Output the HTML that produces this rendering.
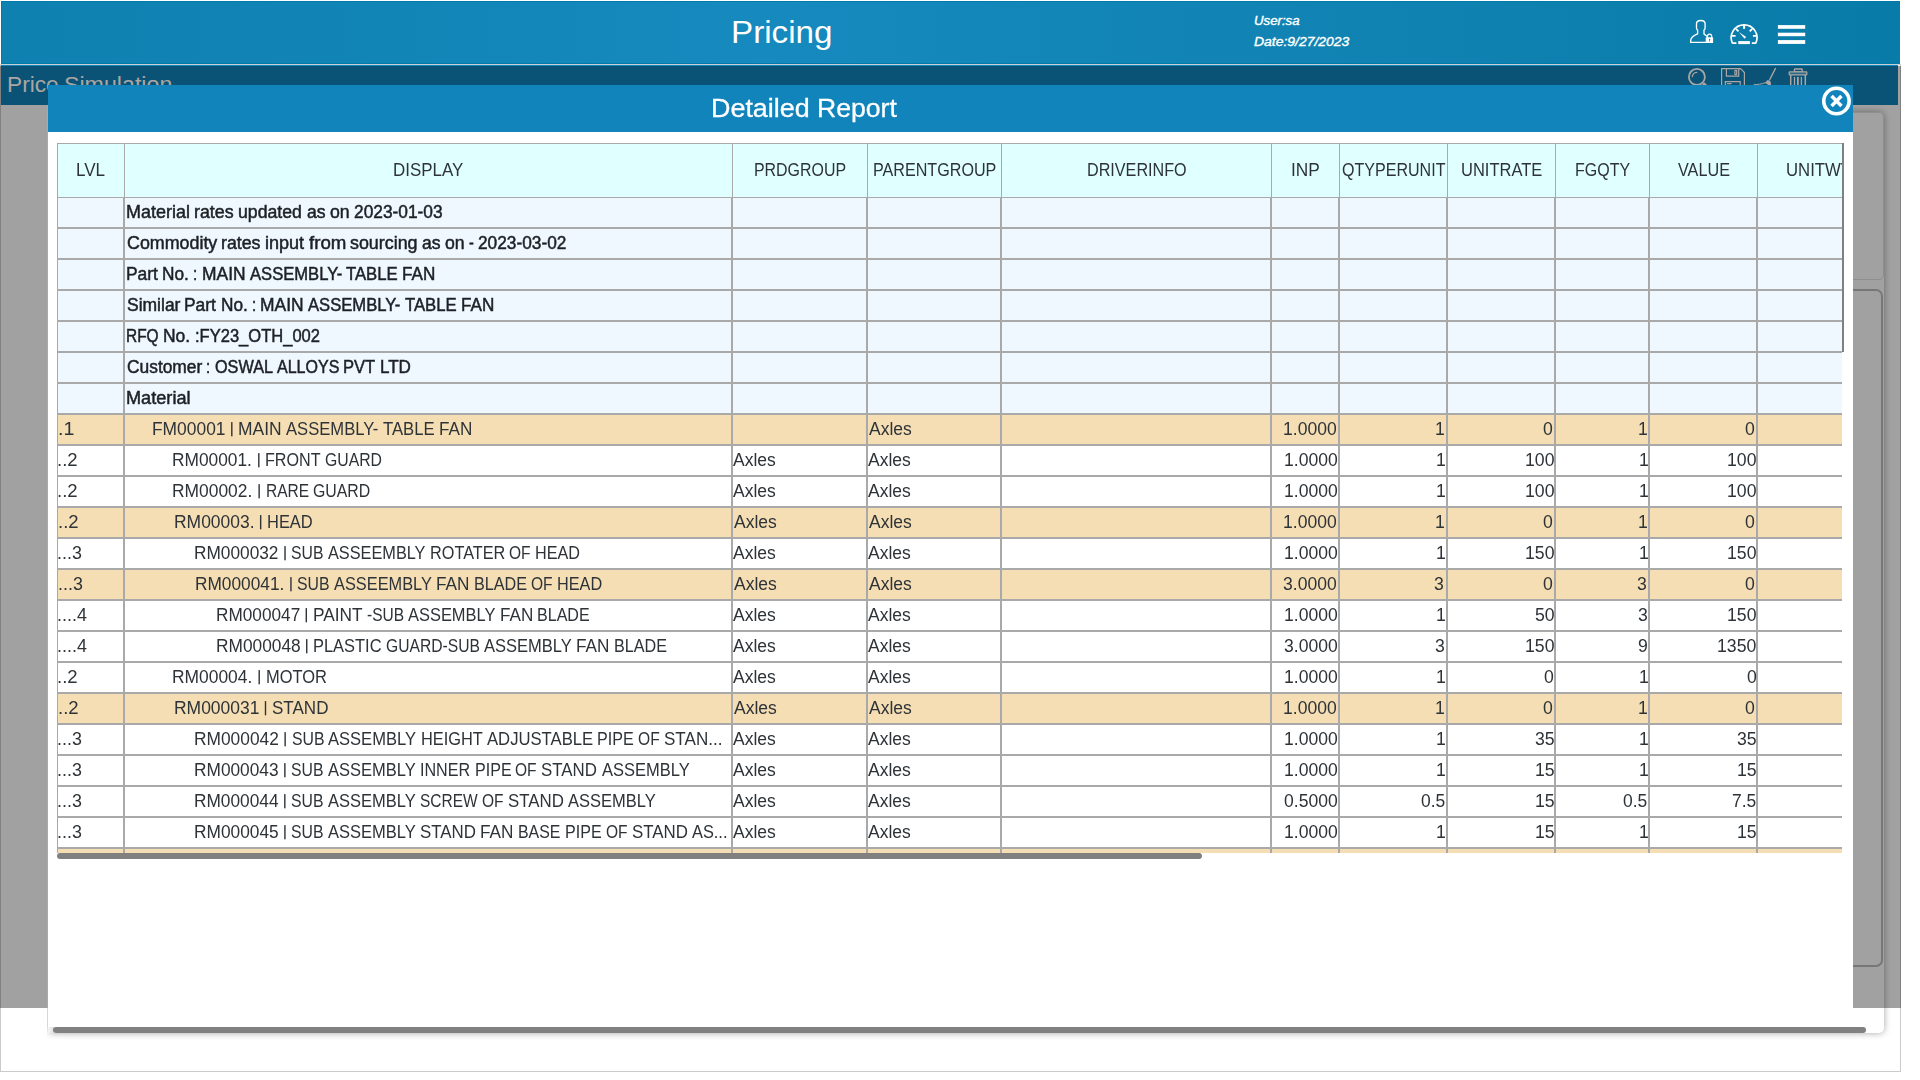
<!DOCTYPE html>
<html><head><meta charset="utf-8"><title>Pricing</title>
<style>

html,body{margin:0;padding:0;}
body{width:1920px;height:1080px;overflow:hidden;background:#fff;position:relative;font-family:'Liberation Sans',sans-serif;}
div{position:absolute;box-sizing:border-box;}
svg{position:absolute;overflow:visible;}
.t{white-space:pre;transform-origin:0 0;}
#frame{left:0;top:64px;width:1901px;height:1008px;border:1px solid #cbcbcb;}
#hdr{left:1px;top:1px;width:1899px;height:63px;background:linear-gradient(90deg,#0e81b0 0%,#1689be 40%,#0f82b1 76%,#097ba9 100%);box-shadow:inset 1px 1px 0 #0079ab, inset 0 -1px 0 #0079ab;}
#hline{left:1px;top:64px;width:1899px;height:1px;background:#cdd1d3;}
#sub{left:1px;top:65px;width:1897px;height:40px;background:#1284bc;}
#subb{left:1px;top:65px;width:1899px;height:41px;border-right:2px solid #fff;border-bottom:1px solid #fff;}
#cont{left:48px;top:112px;width:1836px;height:921px;background:#fff;border-radius:5px;box-shadow:0 0 7px rgba(0,0,0,.36);}
#lcover{left:1px;top:106px;width:46px;height:929px;background:#fff;}
#lpatch{left:48px;top:1027px;width:6px;height:6px;background:linear-gradient(90deg,#f6f6f6,#dedede);}
#card1{left:48px;top:112px;width:1836px;height:168px;border:1px solid #dee2e6;border-radius:5px;}
#card2{left:48px;top:289px;width:1835px;height:678px;border:2px solid #bdbdbd;border-radius:7px;}
#sb2{left:53px;top:1027px;width:1813px;height:6px;border-radius:3px;background:#808080;}
#ovl{left:0;top:66px;width:1901px;height:942px;background:rgba(0,0,0,.37);}
#modal{left:48px;top:85px;width:1805px;height:923px;background:#fff;}
#mh{left:0;top:0;width:1805px;height:47px;background:#1284bc;}
#mledge{left:47px;top:105px;width:1px;height:903px;background:#aea8a5;}
#tv{left:57px;top:143px;width:1785px;height:710px;overflow:hidden;background:#fff;}
.r{left:0;width:1785px;height:29px;}
.ri{background:#f0f8ff;} .rw{background:#f5deb3;} .rn{background:#fff;}
.hl{left:0;width:1785px;height:2px;background:#a9a9a9;}
.vl{top:55px;width:2px;height:655px;background:#a9a9a9;}
#th{left:0;top:0;width:1785px;height:55px;background:#e0ffff;border-top:1px solid #a9a9a9;border-bottom:1px solid #a9a9a9;}
.hv{top:0;width:1px;height:55px;background:#a9a9a9;}
#lb{left:0;top:0;width:1px;height:710px;background:#a9a9a9;}
#sbh{left:57px;top:853px;width:1145px;height:6px;border-radius:3px;background:#808080;}
#sbv{left:1842px;top:143px;width:2px;height:209px;background:#808080;}

</style></head><body>
<div id="frame"></div>
<div id="hdr"></div><div id="hline"></div>
<div class="t" style="left:730.85px;top:13px;font-size:32px;line-height:38px;height:38px;color:#ffffff;transform:scaleX(1.0376);">Pricing</div>
<div class="t" style="left:1254.07px;top:12px;font-size:12px;line-height:18px;height:18px;color:#ffffff;font-style:italic;-webkit-text-stroke:0.35px #ffffff;transform:scaleX(1.1013);">User:sa</div>
<div class="t" style="left:1253.91px;top:33px;font-size:12px;line-height:18px;height:18px;color:#ffffff;font-style:italic;-webkit-text-stroke:0.35px #ffffff;transform:scaleX(1.1617);">Date:9/27/2023</div>
<svg width="1920" height="66" style="left:0;top:0" viewBox="0 0 1920 66">
<g fill="none" stroke="#ffffff" stroke-width="1.35" stroke-linejoin="round" stroke-linecap="round">
<path d="M1706.6 36.1 L1704 33.9 L1704 30.1 C1705 29.5 1705.1 28.9 1705.1 28 L1705.1 23.7 C1705.1 21.6 1703.4 20.5 1700.8 20.5 C1698.2 20.5 1696.5 21.6 1696.5 23.7 L1696.5 28 C1696.5 28.9 1696.6 29.5 1697.6 30.1 L1697.6 33.9 C1694.5 35.3 1690.7 36.8 1690.7 40.4 L1690.7 42.4 L1706 42.4"/>
<path d="M1707.5 37.4 V36.2 a2.1 2.1 0 0 1 4.2 0 V37.4" stroke-width="1.2"/>
</g>
<rect x="1705.7" y="37.2" width="7.4" height="5.8" rx="0.6" fill="#ffffff"/>
<circle cx="1709.6" cy="39.5" r="0.7" fill="#1585b8"/><rect x="1709.25" y="39.6" width="0.7" height="2" fill="#1585b8"/>
<g fill="none" stroke="#ffffff" stroke-width="1.6">
<path d="M1732.53 43.4 A12.9 12.9 0 1 1 1755.67 43.4" stroke-width="1.7"/>
<path d="M1732.3 43.1 H1736.4 M1751.8 43.1 H1755.9" stroke-width="1.7"/>
<path d="M1744.1 24.9 V28.8" stroke-width="2"/>
<path d="M1736 28.9 L1738.5 31.4 M1752.2 28.9 L1749.7 31.4" stroke-width="1.9"/>
<path d="M1731.9 35.9 H1735.6 M1752.9 35.9 H1756.5" stroke-width="1.9"/>
</g>
<path d="M1738.9 31.9 L1746.2 37.1 L1744.6 38.7 Z" fill="#ffffff"/>
<rect x="1738.3" y="41.1" width="11.6" height="3" fill="#ffffff"/>
<rect x="1777.9" y="25.1" width="27.3" height="3.7" fill="#ffffff"/>
<rect x="1777.9" y="32.7" width="27.3" height="3.5" fill="#ffffff"/>
<rect x="1777.9" y="40.1" width="27.3" height="3.8" fill="#ffffff"/>
</svg>
<div id="sub"></div><div id="subb"></div>
<div id="cont"></div><div id="lcover"></div><div id="lpatch"></div><div id="card1"></div><div id="card2"></div><div id="sb2"></div>
<div id="ovl"></div>
<div class="t" style="left:6.76px;top:71px;font-size:22px;line-height:28px;height:28px;color:#aaa6a4;transform:scaleX(1.0321);">Price</div>
<div class="t" style="left:64.15px;top:71px;font-size:22px;line-height:28px;height:28px;color:#aaa6a4;transform:scaleX(1.0543);">Simulation</div>
<div style="left:1680px;top:66px;width:140px;height:19px;overflow:hidden"><svg width="140" height="30" style="left:0;top:0" viewBox="1680 66 140 30">
<g fill="none" stroke="#aaa6a4" stroke-width="1.2">
<circle cx="1696.9" cy="76.9" r="8" stroke-width="1.8"/>
<path d="M1692.3 76.7 A4.9 4.9 0 0 1 1696.8 72.3" stroke-width="1.2" stroke-linecap="round"/>
<path d="M1703.2 83.2 L1709 89" stroke-width="3"/>
<path d="M1721.6 95 V68.6 H1740.6 L1744.4 72.5 V95" />
<path d="M1726.4 68.6 V76.1 H1738.7 V68.6"/>
<rect x="1734.9" y="70.4" width="1.8" height="4.2" rx="0.5"/>
<path d="M1725.3 95 V81.6 H1740.2 V95"/>
<path d="M1727.4 83.6 H1731.2" stroke-linecap="round"/>
<path d="M1775.5 68.4 L1769.7 79.6" stroke-width="1.3" stroke-linecap="round"/>
<path d="M1765.6 82.6 C1761.5 84.2 1758 84.6 1753.8 84.6" stroke-width="1"/>
<rect x="1794.4" y="69.0" width="7.8" height="2.8" rx="0.5" stroke-width="1.3"/>
<rect x="1789.2" y="71.9" width="17.6" height="2.9" rx="0.5" stroke-width="1.3" fill="#2d6a88"/>
<path d="M1790.7 75 V95 M1805.3 75 V95" stroke-width="1.5"/>
<path d="M1794.5 77 V95 M1801.4 77 V95" stroke-width="1.3"/>
<path d="M1797.9 77 V95" stroke-width="1.8"/>
</g>
<path d="M1767.6 80.1 L1770 80.8 C1770.8 82 1771.1 83.2 1771 85 L1768.3 85 C1767 84 1766 83.4 1764.9 82.9 Z" fill="#aaa6a4"/>
</svg></div>
<div id="mledge"></div>
<div id="modal"><div id="mh"></div></div>
<div style="left:0;top:0;width:1920px;height:140px;will-change:transform;">
<div class="t" style="left:711.11px;top:92px;font-size:26px;line-height:32px;height:32px;color:#ffffff;-webkit-text-stroke:0.3px #ffffff;transform:scaleX(1.0345);">Detailed</div>
<div class="t" style="left:816.53px;top:92px;font-size:26px;line-height:32px;height:32px;color:#ffffff;-webkit-text-stroke:0.3px #ffffff;transform:scaleX(1.0234);">Report</div>
</div>
<svg width="40" height="40" style="left:1816px;top:81px" viewBox="1816 81 40 40">
<circle cx="1836.45" cy="101" r="12.7" fill="none" stroke="#ffffff" stroke-width="3.6"/>
<path d="M1831.55 96.05 L1841.45 105.95 M1841.45 96.05 L1831.55 105.95" stroke="#ffffff" stroke-width="3.5" fill="none"/>
</svg>
<div id="tv">
<div class="r ri" style="top:55px"></div>
<div class="r ri" style="top:86px"></div>
<div class="r ri" style="top:117px"></div>
<div class="r ri" style="top:148px"></div>
<div class="r ri" style="top:179px"></div>
<div class="r ri" style="top:210px"></div>
<div class="r ri" style="top:241px"></div>
<div class="r rw" style="top:272px"></div>
<div class="r rn" style="top:303px"></div>
<div class="r rn" style="top:334px"></div>
<div class="r rw" style="top:365px"></div>
<div class="r rn" style="top:396px"></div>
<div class="r rw" style="top:427px"></div>
<div class="r rn" style="top:458px"></div>
<div class="r rn" style="top:489px"></div>
<div class="r rn" style="top:520px"></div>
<div class="r rw" style="top:551px"></div>
<div class="r rn" style="top:582px"></div>
<div class="r rn" style="top:613px"></div>
<div class="r rn" style="top:644px"></div>
<div class="r rn" style="top:675px"></div>
<div class="r rw" style="top:706px"></div>
<div class="hl" style="top:84px"></div>
<div class="hl" style="top:115px"></div>
<div class="hl" style="top:146px"></div>
<div class="hl" style="top:177px"></div>
<div class="hl" style="top:208px"></div>
<div class="hl" style="top:239px"></div>
<div class="hl" style="top:270px"></div>
<div class="hl" style="top:301px"></div>
<div class="hl" style="top:332px"></div>
<div class="hl" style="top:363px"></div>
<div class="hl" style="top:394px"></div>
<div class="hl" style="top:425px"></div>
<div class="hl" style="top:456px"></div>
<div class="hl" style="top:487px"></div>
<div class="hl" style="top:518px"></div>
<div class="hl" style="top:549px"></div>
<div class="hl" style="top:580px"></div>
<div class="hl" style="top:611px"></div>
<div class="hl" style="top:642px"></div>
<div class="hl" style="top:673px"></div>
<div class="hl" style="top:704px"></div>
<div class="vl" style="left:66px"></div>
<div class="vl" style="left:674px"></div>
<div class="vl" style="left:809px"></div>
<div class="vl" style="left:943px"></div>
<div class="vl" style="left:1213px"></div>
<div class="vl" style="left:1281px"></div>
<div class="vl" style="left:1389px"></div>
<div class="vl" style="left:1497px"></div>
<div class="vl" style="left:1591px"></div>
<div class="vl" style="left:1699px"></div>
<div id="th"></div>
<div class="hv" style="left:0px"></div>
<div class="hv" style="left:67px"></div>
<div class="hv" style="left:675px"></div>
<div class="hv" style="left:810px"></div>
<div class="hv" style="left:944px"></div>
<div class="hv" style="left:1214px"></div>
<div class="hv" style="left:1282px"></div>
<div class="hv" style="left:1390px"></div>
<div class="hv" style="left:1498px"></div>
<div class="hv" style="left:1592px"></div>
<div class="hv" style="left:1700px"></div>
<div id="lb"></div>
</div>
<div id="tt" style="left:0;top:0;width:1842px;height:853px;overflow:hidden;will-change:transform;">
<div class="t" style="left:75.93px;top:158px;font-size:18px;line-height:24px;height:24px;color:#2e3338;transform:scaleX(0.9478);">LVL</div>
<div class="t" style="left:392.87px;top:158px;font-size:18px;line-height:24px;height:24px;color:#2e3338;transform:scaleX(0.9395);">DISPLAY</div>
<div class="t" style="left:753.57px;top:158px;font-size:18px;line-height:24px;height:24px;color:#2e3338;transform:scaleX(0.8845);">PRDGROUP</div>
<div class="t" style="left:872.79px;top:158px;font-size:18px;line-height:24px;height:24px;color:#2e3338;transform:scaleX(0.8960);">PARENTGROUP</div>
<div class="t" style="left:1086.86px;top:158px;font-size:18px;line-height:24px;height:24px;color:#2e3338;transform:scaleX(0.8981);">DRIVERINFO</div>
<div class="t" style="left:1291.06px;top:158px;font-size:18px;line-height:24px;height:24px;color:#2e3338;transform:scaleX(0.9597);">INP</div>
<div class="t" style="left:1341.56px;top:158px;font-size:18px;line-height:24px;height:24px;color:#2e3338;transform:scaleX(0.8919);">QTYPERUNIT</div>
<div class="t" style="left:1460.81px;top:158px;font-size:18px;line-height:24px;height:24px;color:#2e3338;transform:scaleX(0.9161);">UNITRATE</div>
<div class="t" style="left:1574.87px;top:158px;font-size:18px;line-height:24px;height:24px;color:#2e3338;transform:scaleX(0.8899);">FGQTY</div>
<div class="t" style="left:1678.37px;top:158px;font-size:18px;line-height:24px;height:24px;color:#2e3338;transform:scaleX(0.9006);">VALUE</div>
<div class="t" style="left:1785.70px;top:158px;font-size:18px;line-height:24px;height:24px;color:#2e3338;transform:scaleX(0.9293);">UNITWT</div>
<div class="t" style="left:126.09px;top:200px;font-size:18px;line-height:24px;height:24px;color:#1d2125;-webkit-text-stroke:0.5px #1d2125;transform:scaleX(0.9984);">Material</div>
<div class="t" style="left:194.36px;top:200px;font-size:18px;line-height:24px;height:24px;color:#1d2125;-webkit-text-stroke:0.5px #1d2125;transform:scaleX(0.9888);">rates</div>
<div class="t" style="left:238.29px;top:200px;font-size:18px;line-height:24px;height:24px;color:#1d2125;-webkit-text-stroke:0.5px #1d2125;transform:scaleX(0.9822);">updated</div>
<div class="t" style="left:306.55px;top:200px;font-size:18px;line-height:24px;height:24px;color:#1d2125;-webkit-text-stroke:0.5px #1d2125;transform:scaleX(0.9783);">as</div>
<div class="t" style="left:329.50px;top:200px;font-size:18px;line-height:24px;height:24px;color:#1d2125;-webkit-text-stroke:0.5px #1d2125;transform:scaleX(0.9835);">on</div>
<div class="t" style="left:353.55px;top:200px;font-size:18px;line-height:24px;height:24px;color:#1d2125;-webkit-text-stroke:0.5px #1d2125;transform:scaleX(0.9618);">2023-01-03</div>
<div class="t" style="left:126.56px;top:231px;font-size:18px;line-height:24px;height:24px;color:#1d2125;-webkit-text-stroke:0.5px #1d2125;transform:scaleX(0.9917);">Commodity</div>
<div class="t" style="left:221.17px;top:231px;font-size:18px;line-height:24px;height:24px;color:#1d2125;-webkit-text-stroke:0.5px #1d2125;transform:scaleX(0.9870);">rates</div>
<div class="t" style="left:265.03px;top:231px;font-size:18px;line-height:24px;height:24px;color:#1d2125;-webkit-text-stroke:0.5px #1d2125;transform:scaleX(1.0025);">input</div>
<div class="t" style="left:308.51px;top:231px;font-size:18px;line-height:24px;height:24px;color:#1d2125;-webkit-text-stroke:0.5px #1d2125;transform:scaleX(1.0381);">from</div>
<div class="t" style="left:350.22px;top:231px;font-size:18px;line-height:24px;height:24px;color:#1d2125;-webkit-text-stroke:0.5px #1d2125;transform:scaleX(0.9928);">sourcing</div>
<div class="t" style="left:422.11px;top:231px;font-size:18px;line-height:24px;height:24px;color:#1d2125;-webkit-text-stroke:0.5px #1d2125;transform:scaleX(0.9766);">as</div>
<div class="t" style="left:445.02px;top:231px;font-size:18px;line-height:24px;height:24px;color:#1d2125;-webkit-text-stroke:0.5px #1d2125;transform:scaleX(0.9818);">on</div>
<div class="t" style="left:469.03px;top:231px;font-size:18px;line-height:24px;height:24px;color:#1d2125;-webkit-text-stroke:0.5px #1d2125;transform:scaleX(0.8059);">-</div>
<div class="t" style="left:478.20px;top:231px;font-size:18px;line-height:24px;height:24px;color:#1d2125;-webkit-text-stroke:0.5px #1d2125;transform:scaleX(0.9601);">2023-03-02</div>
<div class="t" style="left:126.10px;top:262px;font-size:18px;line-height:24px;height:24px;color:#1d2125;-webkit-text-stroke:0.5px #1d2125;transform:scaleX(0.9671);">Part</div>
<div class="t" style="left:162.33px;top:262px;font-size:18px;line-height:24px;height:24px;color:#1d2125;-webkit-text-stroke:0.5px #1d2125;transform:scaleX(0.9579);">No.</div>
<div class="t" style="left:193.46px;top:262px;font-size:18px;line-height:24px;height:24px;color:#1d2125;-webkit-text-stroke:0.5px #1d2125;transform:scaleX(0.8380);">:</div>
<div class="t" style="left:201.96px;top:262px;font-size:18px;line-height:24px;height:24px;color:#1d2125;-webkit-text-stroke:0.5px #1d2125;transform:scaleX(0.9681);">MAIN</div>
<div class="t" style="left:249.82px;top:262px;font-size:18px;line-height:24px;height:24px;color:#1d2125;-webkit-text-stroke:0.5px #1d2125;transform:scaleX(0.9223);">ASSEMBLY-</div>
<div class="t" style="left:346.39px;top:262px;font-size:18px;line-height:24px;height:24px;color:#1d2125;-webkit-text-stroke:0.5px #1d2125;transform:scaleX(0.9280);">TABLE</div>
<div class="t" style="left:402.36px;top:262px;font-size:18px;line-height:24px;height:24px;color:#1d2125;-webkit-text-stroke:0.5px #1d2125;transform:scaleX(0.9505);">FAN</div>
<div class="t" style="left:126.57px;top:293px;font-size:18px;line-height:24px;height:24px;color:#1d2125;-webkit-text-stroke:0.5px #1d2125;transform:scaleX(0.9717);">Similar</div>
<div class="t" style="left:184.32px;top:293px;font-size:18px;line-height:24px;height:24px;color:#1d2125;-webkit-text-stroke:0.5px #1d2125;transform:scaleX(0.9672);">Part</div>
<div class="t" style="left:220.55px;top:293px;font-size:18px;line-height:24px;height:24px;color:#1d2125;-webkit-text-stroke:0.5px #1d2125;transform:scaleX(0.9580);">No.</div>
<div class="t" style="left:251.68px;top:293px;font-size:18px;line-height:24px;height:24px;color:#1d2125;-webkit-text-stroke:0.5px #1d2125;transform:scaleX(0.8380);">:</div>
<div class="t" style="left:260.18px;top:293px;font-size:18px;line-height:24px;height:24px;color:#1d2125;-webkit-text-stroke:0.5px #1d2125;transform:scaleX(0.9682);">MAIN</div>
<div class="t" style="left:308.05px;top:293px;font-size:18px;line-height:24px;height:24px;color:#1d2125;-webkit-text-stroke:0.5px #1d2125;transform:scaleX(0.9224);">ASSEMBLY-</div>
<div class="t" style="left:404.63px;top:293px;font-size:18px;line-height:24px;height:24px;color:#1d2125;-webkit-text-stroke:0.5px #1d2125;transform:scaleX(0.9281);">TABLE</div>
<div class="t" style="left:460.61px;top:293px;font-size:18px;line-height:24px;height:24px;color:#1d2125;-webkit-text-stroke:0.5px #1d2125;transform:scaleX(0.9506);">FAN</div>
<div class="t" style="left:126.08px;top:324px;font-size:18px;line-height:24px;height:24px;color:#1d2125;-webkit-text-stroke:0.5px #1d2125;transform:scaleX(0.8593);">RFQ</div>
<div class="t" style="left:163.09px;top:324px;font-size:18px;line-height:24px;height:24px;color:#1d2125;-webkit-text-stroke:0.5px #1d2125;transform:scaleX(0.9711);">No.</div>
<div class="t" style="left:194.65px;top:324px;font-size:18px;line-height:24px;height:24px;color:#1d2125;-webkit-text-stroke:0.5px #1d2125;transform:scaleX(0.9183);">:FY23_OTH_002</div>
<div class="t" style="left:126.57px;top:355px;font-size:18px;line-height:24px;height:24px;color:#1d2125;-webkit-text-stroke:0.5px #1d2125;transform:scaleX(0.9647);">Customer</div>
<div class="t" style="left:206.13px;top:355px;font-size:18px;line-height:24px;height:24px;color:#1d2125;-webkit-text-stroke:0.5px #1d2125;transform:scaleX(0.8338);">:</div>
<div class="t" style="left:214.58px;top:355px;font-size:18px;line-height:24px;height:24px;color:#1d2125;-webkit-text-stroke:0.5px #1d2125;transform:scaleX(0.9011);">OSWAL</div>
<div class="t" style="left:276.85px;top:355px;font-size:18px;line-height:24px;height:24px;color:#1d2125;-webkit-text-stroke:0.5px #1d2125;transform:scaleX(0.8899);">ALLOYS</div>
<div class="t" style="left:343.46px;top:355px;font-size:18px;line-height:24px;height:24px;color:#1d2125;-webkit-text-stroke:0.5px #1d2125;transform:scaleX(0.9191);">PVT</div>
<div class="t" style="left:379.92px;top:355px;font-size:18px;line-height:24px;height:24px;color:#1d2125;-webkit-text-stroke:0.5px #1d2125;transform:scaleX(0.9464);">LTD</div>
<div class="t" style="left:126.07px;top:386px;font-size:18px;line-height:24px;height:24px;color:#1d2125;-webkit-text-stroke:0.5px #1d2125;transform:scaleX(1.0082);">Material</div>
<div class="t" style="left:57.94px;top:417px;font-size:18px;line-height:24px;height:24px;color:#2e3338;transform:scaleX(1.0905);">.1</div>
<div class="t" style="left:151.85px;top:417px;font-size:18px;line-height:24px;height:24px;color:#2e3338;transform:scaleX(0.9663);">FM00001</div>
<svg width="4" height="18" style="left:230px;top:420px" viewBox="230 420 4 18"><rect x="231.11" y="422.1" width="1.4" height="14.2" fill="#2e3338"/></svg>
<div class="t" style="left:238.16px;top:417px;font-size:18px;line-height:24px;height:24px;color:#2e3338;transform:scaleX(0.9683);">MAIN</div>
<div class="t" style="left:286.03px;top:417px;font-size:18px;line-height:24px;height:24px;color:#2e3338;transform:scaleX(0.9225);">ASSEMBLY-</div>
<div class="t" style="left:382.62px;top:417px;font-size:18px;line-height:24px;height:24px;color:#2e3338;transform:scaleX(0.9282);">TABLE</div>
<div class="t" style="left:438.61px;top:417px;font-size:18px;line-height:24px;height:24px;color:#2e3338;transform:scaleX(0.9508);">FAN</div>
<div class="t" style="left:868.96px;top:417px;font-size:18px;line-height:24px;height:24px;color:#2e3338;transform:scaleX(0.9727);">Axles</div>
<div class="t" style="left:1282.83px;top:417px;font-size:18px;line-height:24px;height:24px;color:#2e3338;transform:scaleX(0.9757);">1.0000</div>
<div class="t" style="left:1435.18px;top:417px;font-size:18px;line-height:24px;height:24px;color:#2e3338;transform:scaleX(0.9809);">1</div>
<div class="t" style="left:1542.73px;top:417px;font-size:18px;line-height:24px;height:24px;color:#2e3338;transform:scaleX(0.9809);">0</div>
<div class="t" style="left:1638.18px;top:417px;font-size:18px;line-height:24px;height:24px;color:#2e3338;transform:scaleX(0.9809);">1</div>
<div class="t" style="left:1745.03px;top:417px;font-size:18px;line-height:24px;height:24px;color:#2e3338;transform:scaleX(0.9809);">0</div>
<div class="t" style="left:57.00px;top:448px;font-size:18px;line-height:24px;height:24px;color:#2e3338;transform:scaleX(1.0303);">..2</div>
<div class="t" style="left:172.34px;top:448px;font-size:18px;line-height:24px;height:24px;color:#2e3338;transform:scaleX(0.9624);">RM00001.</div>
<svg width="4" height="18" style="left:257px;top:451px" viewBox="257 451 4 18"><rect x="258.11" y="453.1" width="1.4" height="14.2" fill="#2e3338"/></svg>
<div class="t" style="left:265.23px;top:448px;font-size:18px;line-height:24px;height:24px;color:#2e3338;transform:scaleX(0.8951);">FRONT</div>
<div class="t" style="left:325.07px;top:448px;font-size:18px;line-height:24px;height:24px;color:#2e3338;transform:scaleX(0.8773);">GUARD</div>
<div class="t" style="left:732.96px;top:448px;font-size:18px;line-height:24px;height:24px;color:#2e3338;transform:scaleX(0.9727);">Axles</div>
<div class="t" style="left:867.96px;top:448px;font-size:18px;line-height:24px;height:24px;color:#2e3338;transform:scaleX(0.9727);">Axles</div>
<div class="t" style="left:1283.83px;top:448px;font-size:18px;line-height:24px;height:24px;color:#2e3338;transform:scaleX(0.9757);">1.0000</div>
<div class="t" style="left:1436.48px;top:448px;font-size:18px;line-height:24px;height:24px;color:#2e3338;transform:scaleX(0.9809);">1</div>
<div class="t" style="left:1524.68px;top:448px;font-size:18px;line-height:24px;height:24px;color:#2e3338;transform:scaleX(0.9809);">100</div>
<div class="t" style="left:1639.18px;top:448px;font-size:18px;line-height:24px;height:24px;color:#2e3338;transform:scaleX(0.9809);">1</div>
<div class="t" style="left:1727.08px;top:448px;font-size:18px;line-height:24px;height:24px;color:#2e3338;transform:scaleX(0.9809);">100</div>
<div class="t" style="left:57.00px;top:479px;font-size:18px;line-height:24px;height:24px;color:#2e3338;transform:scaleX(1.0303);">..2</div>
<div class="t" style="left:172.33px;top:479px;font-size:18px;line-height:24px;height:24px;color:#2e3338;transform:scaleX(0.9661);">RM00002.</div>
<svg width="4" height="18" style="left:257px;top:482px" viewBox="257 482 4 18"><rect x="258.44" y="484.1" width="1.4" height="14.2" fill="#2e3338"/></svg>
<div class="t" style="left:265.58px;top:479px;font-size:18px;line-height:24px;height:24px;color:#2e3338;transform:scaleX(0.8629);">RARE</div>
<div class="t" style="left:313.10px;top:479px;font-size:18px;line-height:24px;height:24px;color:#2e3338;transform:scaleX(0.8807);">GUARD</div>
<div class="t" style="left:732.96px;top:479px;font-size:18px;line-height:24px;height:24px;color:#2e3338;transform:scaleX(0.9727);">Axles</div>
<div class="t" style="left:867.96px;top:479px;font-size:18px;line-height:24px;height:24px;color:#2e3338;transform:scaleX(0.9727);">Axles</div>
<div class="t" style="left:1283.83px;top:479px;font-size:18px;line-height:24px;height:24px;color:#2e3338;transform:scaleX(0.9757);">1.0000</div>
<div class="t" style="left:1436.48px;top:479px;font-size:18px;line-height:24px;height:24px;color:#2e3338;transform:scaleX(0.9809);">1</div>
<div class="t" style="left:1524.68px;top:479px;font-size:18px;line-height:24px;height:24px;color:#2e3338;transform:scaleX(0.9809);">100</div>
<div class="t" style="left:1639.18px;top:479px;font-size:18px;line-height:24px;height:24px;color:#2e3338;transform:scaleX(0.9809);">1</div>
<div class="t" style="left:1727.08px;top:479px;font-size:18px;line-height:24px;height:24px;color:#2e3338;transform:scaleX(0.9809);">100</div>
<div class="t" style="left:58.00px;top:510px;font-size:18px;line-height:24px;height:24px;color:#2e3338;transform:scaleX(1.0303);">..2</div>
<div class="t" style="left:173.58px;top:510px;font-size:18px;line-height:24px;height:24px;color:#2e3338;transform:scaleX(0.9693);">RM00003.</div>
<svg width="4" height="18" style="left:258px;top:513px" viewBox="258 513 4 18"><rect x="259.97" y="515.1" width="1.4" height="14.2" fill="#2e3338"/></svg>
<div class="t" style="left:267.14px;top:510px;font-size:18px;line-height:24px;height:24px;color:#2e3338;transform:scaleX(0.9142);">HEAD</div>
<div class="t" style="left:733.96px;top:510px;font-size:18px;line-height:24px;height:24px;color:#2e3338;transform:scaleX(0.9727);">Axles</div>
<div class="t" style="left:868.96px;top:510px;font-size:18px;line-height:24px;height:24px;color:#2e3338;transform:scaleX(0.9727);">Axles</div>
<div class="t" style="left:1282.83px;top:510px;font-size:18px;line-height:24px;height:24px;color:#2e3338;transform:scaleX(0.9757);">1.0000</div>
<div class="t" style="left:1435.18px;top:510px;font-size:18px;line-height:24px;height:24px;color:#2e3338;transform:scaleX(0.9809);">1</div>
<div class="t" style="left:1542.73px;top:510px;font-size:18px;line-height:24px;height:24px;color:#2e3338;transform:scaleX(0.9809);">0</div>
<div class="t" style="left:1638.18px;top:510px;font-size:18px;line-height:24px;height:24px;color:#2e3338;transform:scaleX(0.9809);">1</div>
<div class="t" style="left:1745.03px;top:510px;font-size:18px;line-height:24px;height:24px;color:#2e3338;transform:scaleX(0.9809);">0</div>
<div class="t" style="left:57.04px;top:541px;font-size:18px;line-height:24px;height:24px;color:#2e3338;transform:scaleX(0.9936);">...3</div>
<div class="t" style="left:194.10px;top:541px;font-size:18px;line-height:24px;height:24px;color:#2e3338;transform:scaleX(0.9588);">RM000032</div>
<svg width="4" height="18" style="left:283px;top:544px" viewBox="283 544 4 18"><rect x="284.32" y="546.1" width="1.4" height="14.2" fill="#2e3338"/></svg>
<div class="t" style="left:291.37px;top:541px;font-size:18px;line-height:24px;height:24px;color:#2e3338;transform:scaleX(0.8753);">SUB</div>
<div class="t" style="left:328.07px;top:541px;font-size:18px;line-height:24px;height:24px;color:#2e3338;transform:scaleX(0.9051);">ASSEEMBLY</div>
<div class="t" style="left:429.88px;top:541px;font-size:18px;line-height:24px;height:24px;color:#2e3338;transform:scaleX(0.9036);">ROTATER</div>
<div class="t" style="left:509.49px;top:541px;font-size:18px;line-height:24px;height:24px;color:#2e3338;transform:scaleX(0.8622);">OF</div>
<div class="t" style="left:535.35px;top:541px;font-size:18px;line-height:24px;height:24px;color:#2e3338;transform:scaleX(0.8998);">HEAD</div>
<div class="t" style="left:732.96px;top:541px;font-size:18px;line-height:24px;height:24px;color:#2e3338;transform:scaleX(0.9727);">Axles</div>
<div class="t" style="left:867.96px;top:541px;font-size:18px;line-height:24px;height:24px;color:#2e3338;transform:scaleX(0.9727);">Axles</div>
<div class="t" style="left:1283.83px;top:541px;font-size:18px;line-height:24px;height:24px;color:#2e3338;transform:scaleX(0.9757);">1.0000</div>
<div class="t" style="left:1436.48px;top:541px;font-size:18px;line-height:24px;height:24px;color:#2e3338;transform:scaleX(0.9809);">1</div>
<div class="t" style="left:1524.68px;top:541px;font-size:18px;line-height:24px;height:24px;color:#2e3338;transform:scaleX(0.9809);">150</div>
<div class="t" style="left:1639.18px;top:541px;font-size:18px;line-height:24px;height:24px;color:#2e3338;transform:scaleX(0.9809);">1</div>
<div class="t" style="left:1727.08px;top:541px;font-size:18px;line-height:24px;height:24px;color:#2e3338;transform:scaleX(0.9809);">150</div>
<div class="t" style="left:58.04px;top:572px;font-size:18px;line-height:24px;height:24px;color:#2e3338;transform:scaleX(0.9936);">...3</div>
<div class="t" style="left:195.09px;top:572px;font-size:18px;line-height:24px;height:24px;color:#2e3338;transform:scaleX(0.9600);">RM000041.</div>
<svg width="4" height="18" style="left:289px;top:575px" viewBox="289 575 4 18"><rect x="290.24" y="577.1" width="1.4" height="14.2" fill="#2e3338"/></svg>
<div class="t" style="left:297.32px;top:572px;font-size:18px;line-height:24px;height:24px;color:#2e3338;transform:scaleX(0.8786);">SUB</div>
<div class="t" style="left:334.16px;top:572px;font-size:18px;line-height:24px;height:24px;color:#2e3338;transform:scaleX(0.9085);">ASSEEMBLY</div>
<div class="t" style="left:436.35px;top:572px;font-size:18px;line-height:24px;height:24px;color:#2e3338;transform:scaleX(0.9556);">FAN</div>
<div class="t" style="left:474.12px;top:572px;font-size:18px;line-height:24px;height:24px;color:#2e3338;transform:scaleX(0.8975);">BLADE</div>
<div class="t" style="left:531.43px;top:572px;font-size:18px;line-height:24px;height:24px;color:#2e3338;transform:scaleX(0.8654);">OF</div>
<div class="t" style="left:557.38px;top:572px;font-size:18px;line-height:24px;height:24px;color:#2e3338;transform:scaleX(0.9032);">HEAD</div>
<div class="t" style="left:733.96px;top:572px;font-size:18px;line-height:24px;height:24px;color:#2e3338;transform:scaleX(0.9727);">Axles</div>
<div class="t" style="left:868.96px;top:572px;font-size:18px;line-height:24px;height:24px;color:#2e3338;transform:scaleX(0.9727);">Axles</div>
<div class="t" style="left:1282.83px;top:572px;font-size:18px;line-height:24px;height:24px;color:#2e3338;transform:scaleX(0.9757);">3.0000</div>
<div class="t" style="left:1433.73px;top:572px;font-size:18px;line-height:24px;height:24px;color:#2e3338;transform:scaleX(0.9809);">3</div>
<div class="t" style="left:1542.73px;top:572px;font-size:18px;line-height:24px;height:24px;color:#2e3338;transform:scaleX(0.9809);">0</div>
<div class="t" style="left:1636.73px;top:572px;font-size:18px;line-height:24px;height:24px;color:#2e3338;transform:scaleX(0.9809);">3</div>
<div class="t" style="left:1745.03px;top:572px;font-size:18px;line-height:24px;height:24px;color:#2e3338;transform:scaleX(0.9809);">0</div>
<div class="t" style="left:57.04px;top:603px;font-size:18px;line-height:24px;height:24px;color:#2e3338;transform:scaleX(0.9951);">....4</div>
<div class="t" style="left:215.60px;top:603px;font-size:18px;line-height:24px;height:24px;color:#2e3338;transform:scaleX(0.9563);">RM000047</div>
<svg width="4" height="18" style="left:304px;top:606px" viewBox="304 606 4 18"><rect x="305.59" y="608.1" width="1.4" height="14.2" fill="#2e3338"/></svg>
<div class="t" style="left:312.62px;top:603px;font-size:18px;line-height:24px;height:24px;color:#2e3338;transform:scaleX(0.9611);">PAINT</div>
<div class="t" style="left:366.57px;top:603px;font-size:18px;line-height:24px;height:24px;color:#2e3338;transform:scaleX(0.8625);">-SUB</div>
<div class="t" style="left:407.96px;top:603px;font-size:18px;line-height:24px;height:24px;color:#2e3338;transform:scaleX(0.9130);">ASSEMBLY</div>
<div class="t" style="left:499.65px;top:603px;font-size:18px;line-height:24px;height:24px;color:#2e3338;transform:scaleX(0.9495);">FAN</div>
<div class="t" style="left:537.19px;top:603px;font-size:18px;line-height:24px;height:24px;color:#2e3338;transform:scaleX(0.8919);">BLADE</div>
<div class="t" style="left:732.96px;top:603px;font-size:18px;line-height:24px;height:24px;color:#2e3338;transform:scaleX(0.9727);">Axles</div>
<div class="t" style="left:867.96px;top:603px;font-size:18px;line-height:24px;height:24px;color:#2e3338;transform:scaleX(0.9727);">Axles</div>
<div class="t" style="left:1283.83px;top:603px;font-size:18px;line-height:24px;height:24px;color:#2e3338;transform:scaleX(0.9757);">1.0000</div>
<div class="t" style="left:1436.48px;top:603px;font-size:18px;line-height:24px;height:24px;color:#2e3338;transform:scaleX(0.9809);">1</div>
<div class="t" style="left:1534.51px;top:603px;font-size:18px;line-height:24px;height:24px;color:#2e3338;transform:scaleX(0.9809);">50</div>
<div class="t" style="left:1637.73px;top:603px;font-size:18px;line-height:24px;height:24px;color:#2e3338;transform:scaleX(0.9809);">3</div>
<div class="t" style="left:1727.08px;top:603px;font-size:18px;line-height:24px;height:24px;color:#2e3338;transform:scaleX(0.9809);">150</div>
<div class="t" style="left:57.04px;top:634px;font-size:18px;line-height:24px;height:24px;color:#2e3338;transform:scaleX(0.9951);">....4</div>
<div class="t" style="left:215.60px;top:634px;font-size:18px;line-height:24px;height:24px;color:#2e3338;transform:scaleX(0.9611);">RM000048</div>
<svg width="4" height="18" style="left:305px;top:637px" viewBox="305 637 4 18"><rect x="306.04" y="639.1" width="1.4" height="14.2" fill="#2e3338"/></svg>
<div class="t" style="left:313.11px;top:634px;font-size:18px;line-height:24px;height:24px;color:#2e3338;transform:scaleX(0.9135);">PLASTIC</div>
<div class="t" style="left:385.96px;top:634px;font-size:18px;line-height:24px;height:24px;color:#2e3338;transform:scaleX(0.8700);">GUARD-SUB</div>
<div class="t" style="left:484.25px;top:634px;font-size:18px;line-height:24px;height:24px;color:#2e3338;transform:scaleX(0.9177);">ASSEMBLY</div>
<div class="t" style="left:576.40px;top:634px;font-size:18px;line-height:24px;height:24px;color:#2e3338;transform:scaleX(0.9543);">FAN</div>
<div class="t" style="left:614.13px;top:634px;font-size:18px;line-height:24px;height:24px;color:#2e3338;transform:scaleX(0.8964);">BLADE</div>
<div class="t" style="left:732.96px;top:634px;font-size:18px;line-height:24px;height:24px;color:#2e3338;transform:scaleX(0.9727);">Axles</div>
<div class="t" style="left:867.96px;top:634px;font-size:18px;line-height:24px;height:24px;color:#2e3338;transform:scaleX(0.9727);">Axles</div>
<div class="t" style="left:1283.83px;top:634px;font-size:18px;line-height:24px;height:24px;color:#2e3338;transform:scaleX(0.9757);">3.0000</div>
<div class="t" style="left:1435.03px;top:634px;font-size:18px;line-height:24px;height:24px;color:#2e3338;transform:scaleX(0.9809);">3</div>
<div class="t" style="left:1524.68px;top:634px;font-size:18px;line-height:24px;height:24px;color:#2e3338;transform:scaleX(0.9809);">150</div>
<div class="t" style="left:1637.73px;top:634px;font-size:18px;line-height:24px;height:24px;color:#2e3338;transform:scaleX(0.9809);">9</div>
<div class="t" style="left:1717.26px;top:634px;font-size:18px;line-height:24px;height:24px;color:#2e3338;transform:scaleX(0.9813);">1350</div>
<div class="t" style="left:57.00px;top:665px;font-size:18px;line-height:24px;height:24px;color:#2e3338;transform:scaleX(1.0303);">..2</div>
<div class="t" style="left:172.33px;top:665px;font-size:18px;line-height:24px;height:24px;color:#2e3338;transform:scaleX(0.9668);">RM00004.</div>
<svg width="4" height="18" style="left:257px;top:668px" viewBox="257 668 4 18"><rect x="258.50" y="670.1" width="1.4" height="14.2" fill="#2e3338"/></svg>
<div class="t" style="left:265.65px;top:665px;font-size:18px;line-height:24px;height:24px;color:#2e3338;transform:scaleX(0.9141);">MOTOR</div>
<div class="t" style="left:732.96px;top:665px;font-size:18px;line-height:24px;height:24px;color:#2e3338;transform:scaleX(0.9727);">Axles</div>
<div class="t" style="left:867.96px;top:665px;font-size:18px;line-height:24px;height:24px;color:#2e3338;transform:scaleX(0.9727);">Axles</div>
<div class="t" style="left:1283.83px;top:665px;font-size:18px;line-height:24px;height:24px;color:#2e3338;transform:scaleX(0.9757);">1.0000</div>
<div class="t" style="left:1436.48px;top:665px;font-size:18px;line-height:24px;height:24px;color:#2e3338;transform:scaleX(0.9809);">1</div>
<div class="t" style="left:1544.33px;top:665px;font-size:18px;line-height:24px;height:24px;color:#2e3338;transform:scaleX(0.9809);">0</div>
<div class="t" style="left:1639.18px;top:665px;font-size:18px;line-height:24px;height:24px;color:#2e3338;transform:scaleX(0.9809);">1</div>
<div class="t" style="left:1746.73px;top:665px;font-size:18px;line-height:24px;height:24px;color:#2e3338;transform:scaleX(0.9809);">0</div>
<div class="t" style="left:58.00px;top:696px;font-size:18px;line-height:24px;height:24px;color:#2e3338;transform:scaleX(1.0303);">..2</div>
<div class="t" style="left:173.58px;top:696px;font-size:18px;line-height:24px;height:24px;color:#2e3338;transform:scaleX(0.9694);">RM000031</div>
<svg width="4" height="18" style="left:263px;top:699px" viewBox="263 699 4 18"><rect x="264.80" y="701.1" width="1.4" height="14.2" fill="#2e3338"/></svg>
<div class="t" style="left:271.93px;top:696px;font-size:18px;line-height:24px;height:24px;color:#2e3338;transform:scaleX(0.9456);">STAND</div>
<div class="t" style="left:733.96px;top:696px;font-size:18px;line-height:24px;height:24px;color:#2e3338;transform:scaleX(0.9727);">Axles</div>
<div class="t" style="left:868.96px;top:696px;font-size:18px;line-height:24px;height:24px;color:#2e3338;transform:scaleX(0.9727);">Axles</div>
<div class="t" style="left:1282.83px;top:696px;font-size:18px;line-height:24px;height:24px;color:#2e3338;transform:scaleX(0.9757);">1.0000</div>
<div class="t" style="left:1435.18px;top:696px;font-size:18px;line-height:24px;height:24px;color:#2e3338;transform:scaleX(0.9809);">1</div>
<div class="t" style="left:1542.73px;top:696px;font-size:18px;line-height:24px;height:24px;color:#2e3338;transform:scaleX(0.9809);">0</div>
<div class="t" style="left:1638.18px;top:696px;font-size:18px;line-height:24px;height:24px;color:#2e3338;transform:scaleX(0.9809);">1</div>
<div class="t" style="left:1745.03px;top:696px;font-size:18px;line-height:24px;height:24px;color:#2e3338;transform:scaleX(0.9809);">0</div>
<div class="t" style="left:57.04px;top:727px;font-size:18px;line-height:24px;height:24px;color:#2e3338;transform:scaleX(0.9936);">...3</div>
<div class="t" style="left:193.79px;top:727px;font-size:18px;line-height:24px;height:24px;color:#2e3338;transform:scaleX(0.9632);">RM000042</div>
<svg width="4" height="18" style="left:283px;top:730px" viewBox="283 730 4 18"><rect x="284.43" y="732.1" width="1.4" height="14.2" fill="#2e3338"/></svg>
<div class="t" style="left:291.51px;top:727px;font-size:18px;line-height:24px;height:24px;color:#2e3338;transform:scaleX(0.8793);">SUB</div>
<div class="t" style="left:328.38px;top:727px;font-size:18px;line-height:24px;height:24px;color:#2e3338;transform:scaleX(0.9196);">ASSEMBLY</div>
<div class="t" style="left:420.73px;top:727px;font-size:18px;line-height:24px;height:24px;color:#2e3338;transform:scaleX(0.9097);">HEIGHT</div>
<div class="t" style="left:486.93px;top:727px;font-size:18px;line-height:24px;height:24px;color:#2e3338;transform:scaleX(0.9254);">ADJUSTABLE</div>
<div class="t" style="left:597.40px;top:727px;font-size:18px;line-height:24px;height:24px;color:#2e3338;transform:scaleX(0.8945);">PIPE</div>
<div class="t" style="left:638.42px;top:727px;font-size:18px;line-height:24px;height:24px;color:#2e3338;transform:scaleX(0.8662);">OF</div>
<div class="t" style="left:664.40px;top:727px;font-size:18px;line-height:24px;height:24px;color:#2e3338;transform:scaleX(0.9467);">STAN...</div>
<div class="t" style="left:732.96px;top:727px;font-size:18px;line-height:24px;height:24px;color:#2e3338;transform:scaleX(0.9727);">Axles</div>
<div class="t" style="left:867.96px;top:727px;font-size:18px;line-height:24px;height:24px;color:#2e3338;transform:scaleX(0.9727);">Axles</div>
<div class="t" style="left:1283.83px;top:727px;font-size:18px;line-height:24px;height:24px;color:#2e3338;transform:scaleX(0.9757);">1.0000</div>
<div class="t" style="left:1436.48px;top:727px;font-size:18px;line-height:24px;height:24px;color:#2e3338;transform:scaleX(0.9809);">1</div>
<div class="t" style="left:1534.51px;top:727px;font-size:18px;line-height:24px;height:24px;color:#2e3338;transform:scaleX(0.9809);">35</div>
<div class="t" style="left:1639.18px;top:727px;font-size:18px;line-height:24px;height:24px;color:#2e3338;transform:scaleX(0.9809);">1</div>
<div class="t" style="left:1736.91px;top:727px;font-size:18px;line-height:24px;height:24px;color:#2e3338;transform:scaleX(0.9809);">35</div>
<div class="t" style="left:57.04px;top:758px;font-size:18px;line-height:24px;height:24px;color:#2e3338;transform:scaleX(0.9936);">...3</div>
<div class="t" style="left:193.80px;top:758px;font-size:18px;line-height:24px;height:24px;color:#2e3338;transform:scaleX(0.9604);">RM000043</div>
<svg width="4" height="18" style="left:283px;top:761px" viewBox="283 761 4 18"><rect x="284.17" y="763.1" width="1.4" height="14.2" fill="#2e3338"/></svg>
<div class="t" style="left:291.23px;top:758px;font-size:18px;line-height:24px;height:24px;color:#2e3338;transform:scaleX(0.8768);">SUB</div>
<div class="t" style="left:328.00px;top:758px;font-size:18px;line-height:24px;height:24px;color:#2e3338;transform:scaleX(0.9169);">ASSEMBLY</div>
<div class="t" style="left:420.07px;top:758px;font-size:18px;line-height:24px;height:24px;color:#2e3338;transform:scaleX(0.8957);">INNER</div>
<div class="t" style="left:474.56px;top:758px;font-size:18px;line-height:24px;height:24px;color:#2e3338;transform:scaleX(0.8919);">PIPE</div>
<div class="t" style="left:515.46px;top:758px;font-size:18px;line-height:24px;height:24px;color:#2e3338;transform:scaleX(0.8637);">OF</div>
<div class="t" style="left:541.36px;top:758px;font-size:18px;line-height:24px;height:24px;color:#2e3338;transform:scaleX(0.9368);">STAND</div>
<div class="t" style="left:601.57px;top:758px;font-size:18px;line-height:24px;height:24px;color:#2e3338;transform:scaleX(0.9169);">ASSEMBLY</div>
<div class="t" style="left:732.96px;top:758px;font-size:18px;line-height:24px;height:24px;color:#2e3338;transform:scaleX(0.9727);">Axles</div>
<div class="t" style="left:867.96px;top:758px;font-size:18px;line-height:24px;height:24px;color:#2e3338;transform:scaleX(0.9727);">Axles</div>
<div class="t" style="left:1283.83px;top:758px;font-size:18px;line-height:24px;height:24px;color:#2e3338;transform:scaleX(0.9757);">1.0000</div>
<div class="t" style="left:1436.48px;top:758px;font-size:18px;line-height:24px;height:24px;color:#2e3338;transform:scaleX(0.9809);">1</div>
<div class="t" style="left:1534.51px;top:758px;font-size:18px;line-height:24px;height:24px;color:#2e3338;transform:scaleX(0.9809);">15</div>
<div class="t" style="left:1639.18px;top:758px;font-size:18px;line-height:24px;height:24px;color:#2e3338;transform:scaleX(0.9809);">1</div>
<div class="t" style="left:1736.91px;top:758px;font-size:18px;line-height:24px;height:24px;color:#2e3338;transform:scaleX(0.9809);">15</div>
<div class="t" style="left:57.04px;top:789px;font-size:18px;line-height:24px;height:24px;color:#2e3338;transform:scaleX(0.9936);">...3</div>
<div class="t" style="left:193.80px;top:789px;font-size:18px;line-height:24px;height:24px;color:#2e3338;transform:scaleX(0.9599);">RM000044</div>
<svg width="4" height="18" style="left:283px;top:792px" viewBox="283 792 4 18"><rect x="284.12" y="794.1" width="1.4" height="14.2" fill="#2e3338"/></svg>
<div class="t" style="left:291.18px;top:789px;font-size:18px;line-height:24px;height:24px;color:#2e3338;transform:scaleX(0.8763);">SUB</div>
<div class="t" style="left:327.93px;top:789px;font-size:18px;line-height:24px;height:24px;color:#2e3338;transform:scaleX(0.9165);">ASSEMBLY</div>
<div class="t" style="left:419.96px;top:789px;font-size:18px;line-height:24px;height:24px;color:#2e3338;transform:scaleX(0.8610);">SCREW</div>
<div class="t" style="left:481.95px;top:789px;font-size:18px;line-height:24px;height:24px;color:#2e3338;transform:scaleX(0.8632);">OF</div>
<div class="t" style="left:507.84px;top:789px;font-size:18px;line-height:24px;height:24px;color:#2e3338;transform:scaleX(0.9363);">STAND</div>
<div class="t" style="left:568.02px;top:789px;font-size:18px;line-height:24px;height:24px;color:#2e3338;transform:scaleX(0.9165);">ASSEMBLY</div>
<div class="t" style="left:732.96px;top:789px;font-size:18px;line-height:24px;height:24px;color:#2e3338;transform:scaleX(0.9727);">Axles</div>
<div class="t" style="left:867.96px;top:789px;font-size:18px;line-height:24px;height:24px;color:#2e3338;transform:scaleX(0.9727);">Axles</div>
<div class="t" style="left:1283.83px;top:789px;font-size:18px;line-height:24px;height:24px;color:#2e3338;transform:scaleX(0.9757);">0.5000</div>
<div class="t" style="left:1420.60px;top:789px;font-size:18px;line-height:24px;height:24px;color:#2e3338;transform:scaleX(0.9689);">0.5</div>
<div class="t" style="left:1534.51px;top:789px;font-size:18px;line-height:24px;height:24px;color:#2e3338;transform:scaleX(0.9809);">15</div>
<div class="t" style="left:1623.30px;top:789px;font-size:18px;line-height:24px;height:24px;color:#2e3338;transform:scaleX(0.9689);">0.5</div>
<div class="t" style="left:1732.30px;top:789px;font-size:18px;line-height:24px;height:24px;color:#2e3338;transform:scaleX(0.9689);">7.5</div>
<div class="t" style="left:57.04px;top:820px;font-size:18px;line-height:24px;height:24px;color:#2e3338;transform:scaleX(0.9936);">...3</div>
<div class="t" style="left:193.80px;top:820px;font-size:18px;line-height:24px;height:24px;color:#2e3338;transform:scaleX(0.9610);">RM000045</div>
<svg width="4" height="18" style="left:283px;top:823px" viewBox="283 823 4 18"><rect x="284.22" y="825.1" width="1.4" height="14.2" fill="#2e3338"/></svg>
<div class="t" style="left:291.29px;top:820px;font-size:18px;line-height:24px;height:24px;color:#2e3338;transform:scaleX(0.8773);">SUB</div>
<div class="t" style="left:328.08px;top:820px;font-size:18px;line-height:24px;height:24px;color:#2e3338;transform:scaleX(0.9175);">ASSEMBLY</div>
<div class="t" style="left:420.22px;top:820px;font-size:18px;line-height:24px;height:24px;color:#2e3338;transform:scaleX(0.9374);">STAND</div>
<div class="t" style="left:480.46px;top:820px;font-size:18px;line-height:24px;height:24px;color:#2e3338;transform:scaleX(0.9542);">FAN</div>
<div class="t" style="left:518.19px;top:820px;font-size:18px;line-height:24px;height:24px;color:#2e3338;transform:scaleX(0.8837);">BASE</div>
<div class="t" style="left:564.94px;top:820px;font-size:18px;line-height:24px;height:24px;color:#2e3338;transform:scaleX(0.8924);">PIPE</div>
<div class="t" style="left:605.87px;top:820px;font-size:18px;line-height:24px;height:24px;color:#2e3338;transform:scaleX(0.8642);">OF</div>
<div class="t" style="left:631.79px;top:820px;font-size:18px;line-height:24px;height:24px;color:#2e3338;transform:scaleX(0.9374);">STAND</div>
<div class="t" style="left:692.04px;top:820px;font-size:18px;line-height:24px;height:24px;color:#2e3338;transform:scaleX(0.9087);">AS...</div>
<div class="t" style="left:732.96px;top:820px;font-size:18px;line-height:24px;height:24px;color:#2e3338;transform:scaleX(0.9727);">Axles</div>
<div class="t" style="left:867.96px;top:820px;font-size:18px;line-height:24px;height:24px;color:#2e3338;transform:scaleX(0.9727);">Axles</div>
<div class="t" style="left:1283.83px;top:820px;font-size:18px;line-height:24px;height:24px;color:#2e3338;transform:scaleX(0.9757);">1.0000</div>
<div class="t" style="left:1436.48px;top:820px;font-size:18px;line-height:24px;height:24px;color:#2e3338;transform:scaleX(0.9809);">1</div>
<div class="t" style="left:1534.51px;top:820px;font-size:18px;line-height:24px;height:24px;color:#2e3338;transform:scaleX(0.9809);">15</div>
<div class="t" style="left:1639.18px;top:820px;font-size:18px;line-height:24px;height:24px;color:#2e3338;transform:scaleX(0.9809);">1</div>
<div class="t" style="left:1736.91px;top:820px;font-size:18px;line-height:24px;height:24px;color:#2e3338;transform:scaleX(0.9809);">15</div>
</div>
<div id="sbh"></div><div id="sbv"></div>
</body></html>
